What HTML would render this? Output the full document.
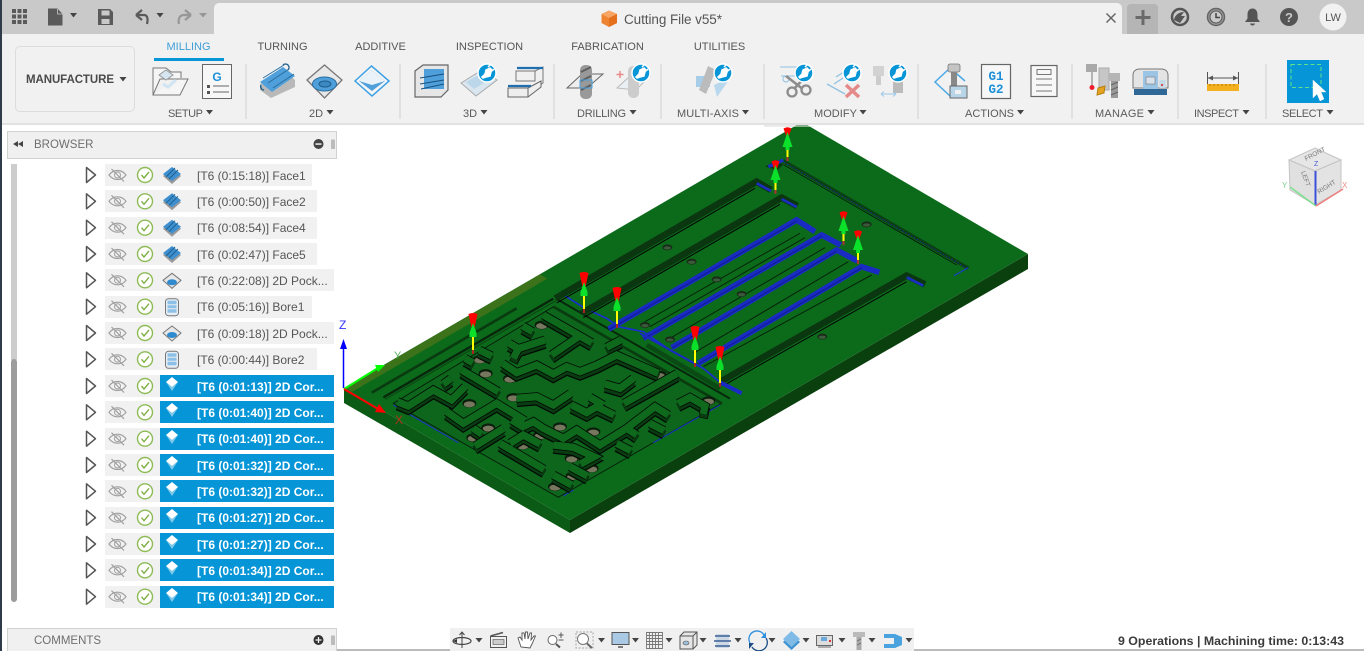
<!DOCTYPE html>
<html><head><meta charset="utf-8"><title>Cutting File v55</title>
<style>
html,body{margin:0;padding:0;background:#fff;width:1364px;height:651px;overflow:hidden}
body{font-family:"Liberation Sans",sans-serif;position:relative}
#root{position:absolute;left:0;top:0;width:1364px;height:651px;overflow:hidden;filter:blur(.35px)}
svg{position:absolute;left:0;top:0;overflow:visible}
text{font-family:"Liberation Sans",sans-serif}
.r{position:absolute;left:105px;height:22px;background:#f1f1f1}
.h{position:absolute;left:55px;top:0;width:174px;height:22px;background:#0696d7}
.t{position:absolute;left:92px;top:.5px;line-height:22px;font-size:12px;color:#555;white-space:nowrap}
.t.b{font-weight:bold;color:#fff}
.p{position:absolute;background:#f0f0f0;border:1.5px solid #d2d2d2;box-sizing:border-box}
</style></head><body><div id="root">

<svg width="1364" height="651" viewBox="0 0 1364 651">
<defs>
 <g id="walls" fill="none" stroke-linejoin="miter" stroke-linecap="butt">
  <path d="M610 75L755 158M715 140L635 195"/>
  <path d="M548 108L578 125"/>
  <path d="M800 172L842 150"/>
  <path d="M508 160L535 176L615 150M535 176L520 205"/>
  <path d="M488 220L530 248L590 225L640 252L680 230L720 245L770 225L830 195L955 250"/>
  <path d="M375 205L398 218M418 180L455 198"/>
  <path d="M365 240L475 305"/>
  <path d="M530 325L590 320L640 345L692 310"/>
  <path d="M852 340L1012 250"/>
  <path d="M795 282L840 295L880 265"/>
  <path d="M695 345L740 368L770 350L822 375M750 322L790 345"/>
  <path d="M172 335L205 348L280 300L335 330L375 290M310 282L332 266"/>
  <path d="M320 365L370 400L470 340L555 392"/>
  <path d="M400 415L425 432M405 468L490 415"/>
  <path d="M515 390L548 410L580 395L610 415L670 445L710 420L780 465L860 415L890 435M860 415L945 350L985 375"/>
  <path d="M480 460L612 538M510 460L550 435L600 462"/>
  <path d="M640 465L700 472L762 500L722 522"/>
  <path d="M640 555L695 585M690 530L742 558"/>
  <path d="M830 460L872 482"/>
  <path d="M930 400L972 422"/>
  <path d="M1015 340L1050 322L1095 348L1090 372"/>
 </g>
 <g id="hole">
  <ellipse cx="0" cy="0" rx="21" ry="13" fill="#0b1d0b"/>
  <ellipse cx="0" cy="3" rx="17" ry="9" fill="#77775f"/>
 </g>
 <g id="hs">
  <ellipse cx="0" cy="0" rx="15" ry="9" fill="#1a2a1a"/><ellipse cx="0" cy="2" rx="11" ry="5" fill="#3a5a3a"/>
 </g>
 <g id="arA">
  <path d="M-4 1.500Q0 -1 4 1.500L1 10H-1Z" fill="#f00"/>
  <path d="M0 5L5 20H2V23H-2V20H-5Z" fill="#0be02a"/>
  <rect x="-1" y="23" width="2" height="7" fill="#ff0"/><rect x="-1" y="30" width="2" height="4" fill="#a33"/>
 </g>
 <g id="arB">
  <path d="M-4.500 1Q0 -1 4.500 1L1 17H-1Z" fill="#f00"/>
  <path d="M0 10L3.500 20V24H-3.500V20Z" fill="#0be02a"/>
  <rect x="-1" y="24" width="2" height="13" fill="#ff0"/><rect x="-1" y="37" width="2" height="4" fill="#a22"/>
 </g>
 <g id="plug">
  <circle r="9" fill="#0696d7" stroke="#fff" stroke-width="1.500"/>
  <path d="M-5 4L-2 1L-1 -3L3 -5L5 -3L4 -1L3 3L-1 4L-4 5Z M1 -6L3 -8M5 -2L7 -4" fill="#fff" stroke="#fff" stroke-width="1.500"/>
 </g>
 <path id="car" d="M-3.500 -2H3.500L0 2.500Z" fill="#444"/>
</defs>

<!-- PLATE -->
<polygon points="344,388 570,520 570,533 344,403" fill="#0b5a16"/>
<polygon points="570,520 1028,254 1028,269 570,533" fill="#0a3f0e"/>
<polygon points="344,388 570,520 1028,254 802,122" fill="#0c6b1b"/>
<path d="M764 125H806L816 127H764Z" fill="#ddd" opacity=".6"/>

<!-- MAZE -->
<g transform="translate(340 290) scale(.33333)">
 <polygon points="12,295 600,-47 622,-34 35,306" fill="#6b7a18" opacity=".5"/>
 <path d="M95 308L530 55" stroke="#0a3a10" stroke-width="8" fill="none"/>
 <path d="M130 322L640 26" stroke="#07260b" stroke-width="7" fill="none"/>
 <path d="M135 328L648 32" stroke="#0c4a15" stroke-width="4" fill="none"/>
 <polygon points="160,340 640,50 1145,340 655,622" fill="#0d661c" stroke="#06210a" stroke-width="3"/>
 <path d="M648 26L1170 326" stroke="#07280c" stroke-width="6" fill="none"/>
 <path d="M640 50L1145 340" stroke="#0a3b10" stroke-width="8" fill="none"/>
 <path d="M160 345L355 458M670 618L700 600M1140 345L940 458" stroke="#1b2fd0" stroke-width="3" fill="none"/>
 <path d="M660 8L735 55L800 85L835 110L910 125L990 180L1090 235L1150 285L1190 305" stroke="#1b2fd0" stroke-width="5" fill="none"/>
 <use href="#hole" x="605" y="105"/><use href="#hole" x="437" y="250"/><use href="#hole" x="510" y="266"/><use href="#hole" x="388" y="340"/><use href="#hole" x="520" y="322"/><use href="#hole" x="420" y="208"/><use href="#hole" x="400" y="443"/><use href="#hole" x="445" y="413"/><use href="#hole" x="548" y="466"/><use href="#hole" x="600" y="436"/><use href="#hole" x="660" y="410"/><use href="#hole" x="695" y="505"/><use href="#hole" x="755" y="535"/><use href="#hole" x="698" y="558"/><use href="#hole" x="645" y="590"/><use href="#hole" x="1105" y="332"/><use href="#hole" x="958" y="255"/><use href="#hole" x="760" y="425"/>
 <use href="#walls" stroke="#020a03" stroke-width="27" transform="translate(0 13)"/>
 <use href="#walls" stroke="#0a3c11" stroke-width="23" transform="translate(0 11)"/>
 <use href="#walls" stroke="#020a03" stroke-width="27"/>
 <use href="#walls" stroke="#0e691d" stroke-width="22"/>
</g>

<!-- CHANNELS -->
<g transform="translate(640 125) scale(.33333)" fill="none">
 <path d="M375 125L410 105L432 118L412 135Z" fill="#0a3a10"/>
 <path d="M430 108L985 430" stroke="#0a3f12" stroke-width="11"/>
 <path d="M432 112L985 432" stroke="#1a2ec0" stroke-width="2" stroke-dasharray="5 5"/>
 <path d="M985 428L942 452" stroke="#1a38e0" stroke-width="3"/>
 <path d="M432 120L950 420" stroke="#000" stroke-width="2"/>
 <path d="M385 125L430 105" stroke="#1a2ec0" stroke-width="10"/>
 <path d="M-254 520L350 170L393 195" stroke="#0a3610" stroke-width="20"/><path d="M350 175L393 198" stroke="#1a2ec0" stroke-width="8"/>
 <path d="M-250 534L345 190" stroke="#000" stroke-width="3"/>
 <path d="M-175 565L425 218L472 243" stroke="#0a3610" stroke-width="20"/><path d="M425 222L470 246" stroke="#1a2ec0" stroke-width="8"/>
 <path d="M-170 578L420 238" stroke="#000" stroke-width="3"/>
 <path d="M-94 612L470 285L525 320" stroke="#1a2bc4" stroke-width="17"/>
 <path d="M-94 614L470 288" stroke="#0c1c8c" stroke-width="3"/>
 <path d="M15 590L480 325M30 605L495 338" stroke="#05230a" stroke-width="3"/>
 <path d="M10 640L545 330L602 360" stroke="#1a2bc4" stroke-width="17"/>
 <path d="M10 642L545 333" stroke="#0c1c8c" stroke-width="3"/>
 <path d="M90 640L555 368" stroke="#05230a" stroke-width="3"/>
 <path d="M95 668L590 375L652 408" stroke="#1a2bc4" stroke-width="17"/>
 <path d="M95 670L590 378" stroke="#0c1c8c" stroke-width="3"/>
 <path d="M160 685L625 410" stroke="#05230a" stroke-width="3"/>
 <path d="M175 715L665 425L718 442" stroke="#1a2bc4" stroke-width="17"/>
 <path d="M175 717L665 428" stroke="#0c1c8c" stroke-width="3"/>
 <path d="M190 725L695 450" stroke="#05230a" stroke-width="3"/>
 <path d="M245 768L800 452L855 478" stroke="#0a3610" stroke-width="20"/><path d="M800 457L850 482" stroke="#1a2ec0" stroke-width="8"/>
 <path d="M250 782L800 470" stroke="#000" stroke-width="3"/>
 <path d="M240 772L305 805" stroke="#1a2bc4" stroke-width="12"/>
 <path d="M0 625L85 672L180 725" stroke="#1a2bc4" stroke-width="6"/>
 <path d="M20 660L240 790" stroke="#0a4a14" stroke-width="14"/>
 <use href="#hs" x="680" y="298"/><use href="#hs" x="82" y="367"/><use href="#hs" x="155" y="410"/><use href="#hs" x="230" y="463"/><use href="#hs" x="305" y="507"/><use href="#hs" x="547" y="635"/><use href="#hs" x="15" y="600"/><use href="#hs" x="90" y="643"/>
</g>
<use href="#arA" x="787.500" y="127"/>
<use href="#arA" x="775.500" y="160"/>
<use href="#arA" x="843.500" y="211"/>
<use href="#arA" x="858" y="230"/>
<use href="#arB" x="695" y="326"/>
<use href="#arB" x="720" y="346"/>
<use href="#arB" x="617" y="287"/>
<use href="#arB" x="584" y="272"/>
<use href="#arB" x="473" y="313"/>

<!-- AXES -->
<path d="M343.500 388V344" stroke="#00f" stroke-width="1.500"/><path d="M343.500 339L340 349H347Z" fill="#00f"/>
<text x="339" y="329" font-size="12" fill="#3232ff">Z</text>
<path d="M344 389L378 368" stroke="#0f0" stroke-width="2"/><path d="M385 365L375 365L378 372Z" fill="#0f0"/>
<text x="394" y="359" font-size="11" fill="#3aa23a" opacity=".8">Y</text>
<path d="M344 389L378 409" stroke="#f00" stroke-width="2"/><path d="M386 413L375 412L379 404Z" fill="#f00"/>
<text x="395" y="424" font-size="12" fill="#b0331a">X</text>

<!-- VIEW CUBE -->
<g>
 <polygon points="1315,148 1341,160 1315,171 1289,160" fill="#e6e6e6" stroke="#c4c4c4"/>
 <polygon points="1289,160 1315,171 1315,205 1290,190" fill="#e0e0e0" stroke="#c4c4c4"/>
 <polygon points="1341,160 1315,171 1315,205 1341,190" fill="#e3e3e3" stroke="#c4c4c4"/>
 <path d="M1315.500 171V206" stroke="#3c4fd8" stroke-width="2"/>
 <path d="M1290 187L1316 206" stroke="#7fe08f" stroke-width="1.500"/>
 <path d="M1316 206L1343 189" stroke="#f07f7f" stroke-width="1.500"/>
 <text x="1282" y="188" font-size="8" fill="#7fd08f">Y</text>
 <text x="1342" y="188" font-size="8" fill="#ee8a8a">X</text>
 <text x="1314" y="166" font-size="7" fill="#4a5ad0">Z</text>
 <text x="0" y="0" font-size="6.500" fill="#777" transform="translate(1306 161) rotate(-28)">FRONT</text>
 <text x="0" y="0" font-size="6.500" fill="#777" transform="translate(1319 194) rotate(-32)">RIGHT</text>
 <text x="0" y="0" font-size="6.500" fill="#777" transform="translate(1301 172) rotate(70)">LEFT</text>
</g>

<!-- bottom line -->
<path d="M337 650H1364" stroke="#777" stroke-width="1"/>
</svg>

<!-- TOP BARS -->
<div style="position:absolute;left:0;top:0;width:1364px;height:34px;background:#c9c9c9"></div>
<div style="position:absolute;left:214px;top:3px;width:908px;height:40px;background:#f1f1f1;border-radius:5px 5px 0 0"></div>
<div style="position:absolute;left:0;top:34px;width:1364px;height:89px;background:#f1f1f1"></div>
<div style="position:absolute;left:0;top:123px;width:1364px;height:2px;background:#e2e2e2"></div>
<div style="position:absolute;left:0;top:0;width:2px;height:651px;background:#2e3b4b"></div>
<div style="position:absolute;left:15px;top:46px;width:120px;height:66px;background:#f1f1f1;border:1.500px solid #dcdcdc;border-radius:5px;box-sizing:border-box"></div>
<div style="position:absolute;left:1127px;top:4px;width:31px;height:30px;background:#b5b5b5;border-radius:4px 4px 0 0"></div>

<svg width="1364" height="125" viewBox="0 0 1364 125">
 <!-- top-left tools -->
 <g fill="#5a5a5a">
  <path d="M12 9h4v4h-4zM17.500 9h4v4h-4zM23 9h4v4h-4zM12 14.500h4v4h-4zM17.500 14.500h4v4h-4zM23 14.500h4v4h-4zM12 20h4v4h-4zM17.500 20h4v4h-4zM23 20h4v4h-4z"/>
  <path d="M48 8.500h9.500l5 5.500v11.500h-14.500z"/>
  <path d="M98 9h12l3 3v13h-15zM101.500 10.500v5h8v-5zM101.500 19v5h8v-5z" fill-rule="evenodd"/>
 </g>
 <path d="M57.500 9V14H62.500" fill="none" stroke="#c9c9c9" stroke-width=".8"/>
 <use href="#car" x="73.500" y="15" fill="#5a5a5a"/>
 <path d="M136 15L142 10M136 15L142 20M136 15H144C148 15 148 20 147 24" fill="none" stroke="#5a5a5a" stroke-width="2.200"/>
 <use href="#car" x="160" y="15"/>
 <path d="M191 15L185 10M191 15L185 20M191 15H184C179 15 178 20 179 24" fill="none" stroke="#979797" stroke-width="2.200"/>
 <path d="M199 13H207L203 17.500Z" fill="#979797"/>

 <!-- title -->
 <polygon points="609,10.500 617,14 617,23 609,27 601.500,23 601.500,14" fill="#ee8432"/>
 <polygon points="609,10.500 617,14 609,18 601.500,14" fill="#f6a565"/>
 <polygon points="609,18 617,14 617,23 609,27" fill="#e5701c"/>
 <text x="624" y="24" font-size="13.500" fill="#555" textLength="98">Cutting File v55*</text>
 <path d="M1106.500 13.500L1115.500 22.500M1115.500 13.500L1106.500 22.500" stroke="#666" stroke-width="1.500"/>
 <path d="M1143 10V25M1135.500 17.500H1150.500" stroke="#6a6a6a" stroke-width="3"/>

 <!-- top right -->
 <circle cx="1180" cy="17" r="8" fill="none" stroke="#555" stroke-width="2.500"/>
 <path d="M1174 20C1175 14 1180 12 1184 12L1181 16L1185 16L1180 23Z" fill="#555"/>
 <circle cx="1216" cy="17" r="8.500" fill="#9a9a9a" stroke="#666" stroke-width="1.500"/>
 <circle cx="1216" cy="17" r="6" fill="#c9c9c9" stroke="#555"/>
 <path d="M1216 13V17.500H1220" fill="none" stroke="#444" stroke-width="1.500"/>
 <path d="M1252.500 8.500c3.500 0 5 3 5 6v4l2.500 3.500h-15l2.500-3.500v-4c0-3 1.500-6 5-6zM1250 23.500h5a2.500 2 0 0 1-5 0z" fill="#555"/>
 <circle cx="1289" cy="17" r="9" fill="#555"/>
 <text x="1289" y="22" font-size="13" font-weight="bold" fill="#c9c9c9" text-anchor="middle">?</text>
 <circle cx="1333" cy="17" r="13.500" fill="#f1f1f1"/>
 <text x="1333" y="21" font-size="11" fill="#555" text-anchor="middle">LW</text>

 <!-- tabs -->
 <g font-size="11" fill="#555" text-anchor="middle">
  <text x="188.500" y="50" fill="#3f9fd6">MILLING</text>
  <text x="282.500" y="50">TURNING</text>
  <text x="380.500" y="50">ADDITIVE</text>
  <text x="489.500" y="50">INSPECTION</text>
  <text x="607.500" y="50">FABRICATION</text>
  <text x="719.500" y="50">UTILITIES</text>
 </g>
 <rect x="154" y="58" width="70" height="3" fill="#0696d7"/>
 <text x="26" y="83" font-size="11.500" font-weight="bold" fill="#4a4a4a" textLength="88">MANUFACTURE</text>
 <use href="#car" x="123" y="79"/>

 <!-- group labels -->
 <g font-size="11" fill="#5a5a5a">
  <text x="168" y="117" textLength="35">SETUP</text><use href="#car" x="209.500" y="112"/>
  <text x="309" y="117">2D</text><use href="#car" x="330" y="112"/>
  <text x="463" y="117">3D</text><use href="#car" x="484" y="112"/>
  <text x="577" y="117" textLength="49">DRILLING</text><use href="#car" x="633" y="112"/>
  <text x="677" y="117" textLength="62">MULTI-AXIS</text><use href="#car" x="745.500" y="112"/>
  <text x="814" y="117" textLength="43">MODIFY</text><use href="#car" x="863" y="112"/>
  <text x="965" y="117" textLength="49">ACTIONS</text><use href="#car" x="1020.500" y="112"/>
  <text x="1095" y="117" textLength="49">MANAGE</text><use href="#car" x="1151" y="112"/>
  <text x="1194" y="117" textLength="45">INSPECT</text><use href="#car" x="1246" y="112"/>
  <text x="1282" y="117" textLength="41">SELECT</text><use href="#car" x="1330" y="112"/>
 </g>
 <path d="M246 64V119M400 64V119M554 64V119M661 64V119M764 64V119M918 64V119M1072 64V119M1178 64V119M1266 64V119" stroke="#dcdcdc" stroke-width="1.500"/>

 <!-- SETUP -->
 <path d="M153 95V68H166L171 72H181V78M153 95H180L188 79H160Z" fill="#f5f5f5" stroke="#777" stroke-width="1"/>
 <path d="M159 75L166 70L173 75L166 80Z" fill="#d5e6f2" stroke="#999"/>
 <path d="M163 84L168 87L176 80" stroke="#d0e4f2" stroke-width="3" fill="none"/>
 <rect x="202.500" y="64.500" width="29" height="34" fill="#f7f7f7" stroke="#666"/>
 <text x="217" y="81" font-size="12" font-weight="bold" fill="#1b8fd8" text-anchor="middle">G</text>
 <path d="M207 85h3v3h-3zM207 91h3v3h-3z" fill="#555"/><path d="M213 86H229M213 92H229" stroke="#666"/>

 <!-- 2D -->
 <polygon points="260,84 284,70 295,80 295,87 271,98 260,90" fill="#b9b9b9"/>
 <polygon points="260,82 283,67 295,76 272,92" fill="#4f9fdb"/>
 <path d="M263 78L284 65M268 83L289 69M273 88L294 74" stroke="#2a6f9f" stroke-width="1" fill="none"/>
 <path d="M283 65a3.500 3.500 0 0 1 5 5M264 90a3.500 3.500 0 0 1 -3 -5" stroke="#1f5f8a" stroke-width="1.300" fill="none"/>
 <polygon points="307,80 324.500,65 342,80 324.500,98" fill="#e8e8e8" stroke="#777" stroke-width="1.300"/>
 <ellipse cx="324.500" cy="84" rx="12" ry="7" fill="#4f9fdb" stroke="#2a6f9f"/>
 <ellipse cx="325" cy="84" rx="6" ry="3" fill="#3b88c3" stroke="#1f5f8a"/>
 <polygon points="355,81 371.500,66 389,81 372,96" fill="#f5f5f5" stroke="#3aa0e6" stroke-width="1.500"/>
 <polygon points="359,81 371.500,70 385,81 372,91" fill="#4f9fdb"/>
 <polygon points="371.500,70 385,81 372,85 359,81" fill="#e8f2f8"/>

 <!-- 3D -->
 <polygon points="415,71 423,65 448,65 448,90 441,97 415,97" fill="#e6e6e6" stroke="#666" stroke-width="1.200"/>
 <rect x="424" y="69" width="20" height="20" fill="#4f9fdb"/>
 <path d="M420 78L444 74M420 84L444 80M421 89L444 84" stroke="#17527f" stroke-width="1" fill="none"/>
 <polygon points="461,83 482,70 497,80 476,96" fill="#d9e6ef" stroke="#aaa"/>
 <polygon points="466,82 482,73 490,79 474,89" fill="#bcd7ea"/>
 <use href="#plug" x="487" y="73"/>
 <path d="M516 71H535V81H516ZM535 71L543 67V83L535 88" fill="#f0f0f0" stroke="#777"/>
 <path d="M508 88H528V97H508ZM528 88L541 81V87L528 97" fill="#eee" stroke="#666"/>
 <path d="M517 68H543M508 86H531" stroke="#1f6fb0" stroke-width="2.200"/>

 <!-- DRILLING -->
 <polygon points="567,88 582,74 603,74 587,88" fill="#eee" stroke="#666"/>
 <rect x="580" y="65" width="12" height="34" rx="5" fill="#999"/>
 <path d="M581 72L591 67M581 81L591 76M581 90L591 85" stroke="#5f5f5f" stroke-width="2"/>
 <rect x="580" y="80" width="12" height="8" fill="none" stroke="#4aa3df"/>
 <path d="M620 71V78M616.500 74.500H623.500" stroke="#e88a8a" stroke-width="1.500"/>
 <polygon points="617,88 630,76 650,76 636,90" fill="#e9eff3" stroke="#bbb"/>
 <rect x="628" y="66" width="11" height="32" rx="5" fill="#ccc"/>
 <use href="#plug" x="641" y="73"/>

 <!-- MULTI-AXIS -->
 <polygon points="696,76 710,76 710,87 696,87" fill="#a8cde8"/>
 <polygon points="708,66 716,70 706,94 699,90" fill="#bbb"/>
 <polygon points="714,85 731,77 717,97" fill="#b9d8ee"/>
 <use href="#plug" x="723" y="73"/>

 <!-- MODIFY -->
 <path d="M780 67H800M781 76H795" stroke="#8fc2e3" stroke-width="1"/>
 <circle cx="786" cy="79" r="3" fill="none" stroke="#8fc2e3"/>
 <path d="M786 76L804 90M806 76L793 90" stroke="#8c8c8c" stroke-width="2.600"/>
 <circle cx="792" cy="92" r="4.500" fill="#f1f1f1" stroke="#8c8c8c" stroke-width="2.300"/>
 <circle cx="806" cy="90" r="4.500" fill="#f1f1f1" stroke="#8c8c8c" stroke-width="2.300"/>
 <use href="#plug" x="804" y="73"/>
 <path d="M827 84L845 94M836 77L850 68M834 84L843 78" stroke="#8fc2e3" stroke-width="1.300" fill="none"/>
 <use href="#plug" x="852" y="73"/>
 <path d="M846 85L859 97M859 85L846 97" stroke="#e58a8a" stroke-width="3.500"/>
 <rect x="873" y="66" width="11" height="10" fill="#d2d2d2"/><rect x="876" y="76" width="5" height="9" fill="#ccc"/>
 <rect x="893" y="69" width="10" height="24" fill="#bbb"/>
 <path d="M881 94H896M881 94l3-2.500M881 94l3 2.500M896 94l-3-2.500M896 94l-3 2.500" stroke="#9cc8e6" fill="none"/>
 <use href="#plug" x="898" y="73"/>

 <!-- ACTIONS -->
 <path d="M950 68L935 82L950 96M950 68L965 81" stroke="#4aa8e8" stroke-width="1.500" fill="none"/>
 <rect x="948" y="64" width="12" height="8" rx="2" fill="#c4c4c4" stroke="#777" stroke-width=".8"/>
 <rect x="951" y="72" width="6" height="14" fill="#888"/>
 <rect x="950" y="86" width="17" height="12" fill="#b9d5e8" stroke="#666"/>
 <rect x="955" y="90" width="6" height="4" fill="#f1f1f1"/>
 <rect x="981.500" y="64.500" width="29" height="34" fill="#f7f7f7" stroke="#666" stroke-width="1.200"/>
 <text x="996" y="80" font-size="12.500" font-weight="bold" fill="#1b8fd8" text-anchor="middle" style="font-family:'Liberation Mono',monospace">G1</text>
 <text x="996" y="93" font-size="12.500" font-weight="bold" fill="#1b8fd8" text-anchor="middle" style="font-family:'Liberation Mono',monospace">G2</text>
 <rect x="1031" y="65.500" width="26" height="31" fill="#f7f7f7" stroke="#666" stroke-width="1.200"/>
 <rect x="1037" y="69.500" width="14" height="5" fill="none" stroke="#777"/>
 <path d="M1036 79H1052M1036 85H1052M1036 91H1052" stroke="#777"/>

 <!-- MANAGE -->
 <rect x="1086" y="64" width="11" height="8" fill="#a9a9a9"/><path d="M1092 72V86" stroke="#777"/>
 <circle cx="1092" cy="87.500" r="2.500" fill="#f01f30"/>
 <rect x="1099" y="68" width="10" height="22" fill="#c6c6c6" stroke="#aaa"/>
 <polygon points="1098,88 1105,86 1104,93 1097,95" fill="#e3a21f" stroke="#b57f10"/>
 <rect x="1109" y="73" width="11" height="8" fill="#b5b5b5"/><rect x="1111" y="81" width="7" height="17" fill="#999"/>
 <path d="M1111 85L1118 82M1111 90L1118 87M1111 95L1118 92" stroke="#666"/>
 <path d="M1133 88V75C1133 71 1136 69 1140 69H1161C1165 69 1168 71 1168 75V88Z" fill="#e4e4e4" stroke="#777"/>
 <rect x="1143" y="71" width="15" height="18" fill="#9cc4e4"/>
 <rect x="1146" y="77" width="9" height="7" fill="#d9e2ea" stroke="#777" stroke-width=".6"/>
 <rect x="1159.500" y="80" width="6" height="8" fill="#c5d8e6"/><circle cx="1162" cy="85" r="1" fill="#d22"/>
 <rect x="1134" y="89" width="33" height="6" fill="#2f6796"/>

 <!-- INSPECT -->
 <path d="M1207.500 72V88M1238.500 72V88M1208 78H1238" stroke="#555"/>
 <path d="M1208 78l5-2.500v5zM1238 78l-5-2.500v5z" fill="#555"/>
 <rect x="1207" y="84" width="32" height="7" fill="#f3b01f"/>
 <path d="M1210 84v2M1214 84v2M1218 84v2M1222 84v2M1226 84v2M1230 84v2M1234 84v2" stroke="#a66f00" stroke-width=".8"/>

 <!-- SELECT -->
 <rect x="1287" y="60" width="42" height="43" fill="#0696d7"/>
 <rect x="1291" y="64.500" width="30" height="23" fill="none" stroke="#62e08c" stroke-width="1" stroke-dasharray="4 2.500"/>
 <path d="M1313 80V98L1317 94L1320 101L1324 99L1321 92L1326 92Z" fill="#fff" stroke="#e8e8e8" stroke-width=".5"/>
</svg>

<!-- BROWSER -->
<div class="p" style="left:7px;top:131px;width:330px;height:28px"></div>
<div style="position:absolute;left:34px;top:138px;font-size:11.500px;color:#6f6f6f;line-height:15px">BROWSER</div>
<div class="p" style="left:7px;top:628px;width:330px;height:26px"></div>
<div style="position:absolute;left:34px;top:634px;font-size:11.500px;color:#6f6f6f;line-height:15px">COMMENTS</div>
<div style="position:absolute;left:11px;top:164px;width:6px;height:196px;background:#cdcdcd"></div>
<div style="position:absolute;left:11px;top:359px;width:6px;height:243px;background:#9c9c9c;border-radius:3px"></div>

<svg width="345" height="651" viewBox="0 0 345 651">
 <defs>
  <g id="tri"><path d="M1 1.500L10 9L1 16.500Z" fill="#fff" stroke="#555" stroke-width="1.500" stroke-linejoin="round"/></g>
  <g id="eye"><path d="M-8.500 0C-4 -6 4 -6 8.500 0C4 6 -4 6 -8.500 0Z" fill="none" stroke="#a0a0a0" stroke-width="1.200"/><circle r="3" fill="none" stroke="#a0a0a0"/><path d="M-6 -6L6.500 6.500" stroke="#a0a0a0" stroke-width="1.200"/></g>
  <g id="chk"><circle r="7.500" fill="#fff" stroke="#8dbb55" stroke-width="1.400"/><path d="M-3.500 0L-1 3L4 -3" fill="none" stroke="#7fb045" stroke-width="1.400"/></g>
  <g id="fc"><polygon points="-9,1 0,-7 9,1 0,9" fill="#999"/><polygon points="-9,-1 0,-8 9,-1 0,6" fill="#3d8fd0"/><path d="M-6 2L3 -7M-3 4L6 -5" stroke="#1f5f8a" stroke-width="1"/></g>
  <g id="pk"><polygon points="-9,0 0,-7 9,0 0,8" fill="#e8e8e8" stroke="#777"/><ellipse cx="0" cy="2" rx="5" ry="3" fill="#2f8ad0"/></g>
  <g id="bo"><rect x="-6.500" y="-8" width="13" height="17" rx="3" fill="#e6eef4" stroke="#777"/><rect x="-4.500" y="-6" width="9" height="12" fill="#8cc0e6"/><path d="M-4.500 -2H4.500M-4.500 2H4.500" stroke="#e6eef4"/></g>
  <g id="cr"><polygon points="-6,0 0,-5 6,0 0,5" fill="#fff"/><polygon points="-6,0 0,5 6,0 0,9" fill="#cfe9f7" opacity=".6"/></g>
 </defs>
 <path d="M13 144L18 141V147ZM18 144L23 141V147Z" fill="#444"/>
 <circle cx="318.500" cy="144" r="5" fill="#444"/><rect x="315.500" y="143.300" width="6" height="1.500" fill="#f0f0f0"/>
 <path d="M332 139.500V149M334 139.500V149" stroke="#888"/>
 <circle cx="318.500" cy="640" r="5" fill="#333"/><path d="M315.500 640H321.500M318.500 637V643" stroke="#f0f0f0" stroke-width="1.300"/>
 <path d="M332 635.500V645M334 635.500V645" stroke="#888"/>
</svg>

<!-- rows -->
<div class="r" style="top:164px;width:207px"><div class="t">[T6 (0:15:18)] Face1</div></div>
<div class="r" style="top:190.300px;width:212px"><div class="t">[T6 (0:00:50)] Face2</div></div>
<div class="r" style="top:216.700px;width:212px"><div class="t">[T6 (0:08:54)] Face4</div></div>
<div class="r" style="top:243px;width:212px"><div class="t">[T6 (0:02:47)] Face5</div></div>
<div class="r" style="top:269.300px;width:229px"><div class="t">[T6 (0:22:08)] 2D Pock...</div></div>
<div class="r" style="top:295.700px;width:207px"><div class="t">[T6 (0:05:16)] Bore1</div></div>
<div class="r" style="top:322px;width:229px"><div class="t">[T6 (0:09:18)] 2D Pock...</div></div>
<div class="r" style="top:348.300px;width:212px"><div class="t">[T6 (0:00:44)] Bore2</div></div>
<div class="r" style="top:375px;width:229px"><div class="h"></div><div class="t b">[T6 (0:01:13)] 2D Cor...</div></div>
<div class="r" style="top:401.300px;width:229px"><div class="h"></div><div class="t b">[T6 (0:01:40)] 2D Cor...</div></div>
<div class="r" style="top:427.700px;width:229px"><div class="h"></div><div class="t b">[T6 (0:01:40)] 2D Cor...</div></div>
<div class="r" style="top:454px;width:229px"><div class="h"></div><div class="t b">[T6 (0:01:32)] 2D Cor...</div></div>
<div class="r" style="top:480.300px;width:229px"><div class="h"></div><div class="t b">[T6 (0:01:32)] 2D Cor...</div></div>
<div class="r" style="top:506.700px;width:229px"><div class="h"></div><div class="t b">[T6 (0:01:27)] 2D Cor...</div></div>
<div class="r" style="top:533px;width:229px"><div class="h"></div><div class="t b">[T6 (0:01:27)] 2D Cor...</div></div>
<div class="r" style="top:559.300px;width:229px"><div class="h"></div><div class="t b">[T6 (0:01:34)] 2D Cor...</div></div>
<div class="r" style="top:585.700px;width:229px"><div class="h"></div><div class="t b">[T6 (0:01:34)] 2D Cor...</div></div>

<svg width="345" height="651" viewBox="0 0 345 651">
 <g>
  <use href="#tri" x="85.500" y="166"/><use href="#eye" x="117.500" y="175"/><use href="#chk" x="145" y="175"/><use href="#fc" x="172" y="175"/>
  <use href="#tri" x="85.500" y="192.300"/><use href="#eye" x="117.500" y="201.300"/><use href="#chk" x="145" y="201.300"/><use href="#fc" x="172" y="201.300"/>
  <use href="#tri" x="85.500" y="218.700"/><use href="#eye" x="117.500" y="227.700"/><use href="#chk" x="145" y="227.700"/><use href="#fc" x="172" y="227.700"/>
  <use href="#tri" x="85.500" y="245"/><use href="#eye" x="117.500" y="254"/><use href="#chk" x="145" y="254"/><use href="#fc" x="172" y="254"/>
  <use href="#tri" x="85.500" y="271.300"/><use href="#eye" x="117.500" y="280.300"/><use href="#chk" x="145" y="280.300"/><use href="#pk" x="172" y="280.300"/>
  <use href="#tri" x="85.500" y="297.700"/><use href="#eye" x="117.500" y="306.700"/><use href="#chk" x="145" y="306.700"/><use href="#bo" x="172" y="306.700"/>
  <use href="#tri" x="85.500" y="324"/><use href="#eye" x="117.500" y="333"/><use href="#chk" x="145" y="333"/><use href="#pk" x="172" y="333"/>
  <use href="#tri" x="85.500" y="350.300"/><use href="#eye" x="117.500" y="359.300"/><use href="#chk" x="145" y="359.300"/><use href="#bo" x="172" y="359.300"/>
  <use href="#tri" x="85.500" y="377"/><use href="#eye" x="117.500" y="386"/><use href="#chk" x="145" y="386"/><use href="#cr" x="172" y="382"/>
  <use href="#tri" x="85.500" y="403.300"/><use href="#eye" x="117.500" y="412.300"/><use href="#chk" x="145" y="412.300"/><use href="#cr" x="172" y="408"/>
  <use href="#tri" x="85.500" y="429.700"/><use href="#eye" x="117.500" y="438.700"/><use href="#chk" x="145" y="438.700"/><use href="#cr" x="172" y="435"/>
  <use href="#tri" x="85.500" y="456"/><use href="#eye" x="117.500" y="465"/><use href="#chk" x="145" y="465"/><use href="#cr" x="172" y="461"/>
  <use href="#tri" x="85.500" y="482.300"/><use href="#eye" x="117.500" y="491.300"/><use href="#chk" x="145" y="491.300"/><use href="#cr" x="172" y="487"/>
  <use href="#tri" x="85.500" y="508.700"/><use href="#eye" x="117.500" y="517.700"/><use href="#chk" x="145" y="517.700"/><use href="#cr" x="172" y="514"/>
  <use href="#tri" x="85.500" y="535"/><use href="#eye" x="117.500" y="544"/><use href="#chk" x="145" y="544"/><use href="#cr" x="172" y="540"/>
  <use href="#tri" x="85.500" y="561.300"/><use href="#eye" x="117.500" y="570.300"/><use href="#chk" x="145" y="570.300"/><use href="#cr" x="172" y="566"/>
  <use href="#tri" x="85.500" y="587.700"/><use href="#eye" x="117.500" y="596.700"/><use href="#chk" x="145" y="596.700"/><use href="#cr" x="172" y="593"/>
 </g>
</svg>

<!-- NAV BAR -->
<div style="position:absolute;left:450px;top:628px;width:464px;height:23px;background:#f0f0f0"></div>
<svg width="1364" height="651" viewBox="0 0 1364 651">
 <!-- orbit -->
 <path d="M462 632V648M459.500 635L462 632L464.500 635" stroke="#444" fill="none"/>
 <ellipse cx="462" cy="641" rx="9" ry="3.500" fill="none" stroke="#444" stroke-width="1.200"/>
 <path d="M453 641L457 639V643Z" fill="#333"/>
 <use href="#car" x="479" y="640"/>
 <!-- capture -->
 <rect x="490.500" y="636.500" width="16" height="11" fill="none" stroke="#555"/><rect x="493" y="639.500" width="11" height="5" fill="#ccc" stroke="#666" stroke-width=".7"/>
 <path d="M490.500 636L503 632.500" stroke="#555" stroke-width="1.500"/>
 <!-- hand -->
 <path d="M521 647L518 638L520 637L522 640L522 633H524L525 639L525.500 632H527.500L528 639L530 633H531.500L531 640L534 636H535.500L532 644L530 648Z" fill="#fff" stroke="#555" stroke-width=".9"/>
 <!-- zoom -->
 <circle cx="552.500" cy="640" r="4.500" fill="#fff" stroke="#666"/><path d="M556 644L560 647.500" stroke="#555" stroke-width="2"/>
 <path d="M561 632.500V638M558.500 635H563.500M558.500 640H563.500" stroke="#555"/>
 <!-- fit -->
 <rect x="576" y="632" width="17" height="16" fill="none" stroke="#aaa" stroke-dasharray="2 1.500"/>
 <circle cx="583" cy="639" r="5.500" fill="#fff" stroke="#777"/><path d="M587 643.500L592 648" stroke="#666" stroke-width="2"/>
 <use href="#car" x="601.500" y="640"/>
 <!-- display -->
 <rect x="612" y="632.500" width="17" height="12" fill="#a9c9e4" stroke="#555"/><path d="M618 647H623" stroke="#555" stroke-width="1.500"/>
 <use href="#car" x="635.500" y="640"/>
 <!-- grid -->
 <path d="M646.500 632.500H662.500V648.500H646.500ZM649.500 632.500V648.500M652.500 632.500V648.500M655.500 632.500V648.500M658.500 632.500V648.500M646.500 635.500H662.500M646.500 638.500H662.500M646.500 641.500H662.500M646.500 644.500H662.500" fill="none" stroke="#777" stroke-width=".9"/>
 <use href="#car" x="669" y="640"/>
 <!-- visual style -->
 <path d="M680 636H693V649H680ZM680 636L684 632H697V645L693 649M693 636L697 632" fill="#e6e6e6" stroke="#555"/>
 <ellipse cx="686" cy="643" rx="3" ry="2" fill="#9dc1dd" stroke="#555" stroke-width=".6"/>
 <use href="#car" x="703" y="640"/>
 <!-- sections -->
 <path d="M716 634H729V648H716Z" fill="#a9c0da" opacity=".5"/>
 <path d="M715 636H730M714 641H731M715 646H730" stroke="#3a5f96" stroke-width="1.600"/>
 <use href="#car" x="738" y="640"/>
 <!-- rotate -->
 <path d="M750 643A8 8 0 0 1 764 635" fill="none" stroke="#2f8fdf" stroke-width="1.300"/><path d="M766 638A8 8 0 0 1 752 647" fill="none" stroke="#1a4d86" stroke-width="1.300"/>
 <path d="M766 632V638H761Z" fill="#2f8fdf"/><path d="M749 649V643H754Z" fill="#1a4d86"/>
 <use href="#car" x="772" y="640"/>
 <!-- stack -->
 <polygon points="783,642 791.500,634 800,642 791.500,650" fill="#3f93d2"/>
 <polygon points="783,639 791.500,631 800,639 791.500,647" fill="#7fbbe6"/>
 <use href="#car" x="806" y="640"/>
 <!-- machine -->
 <rect x="816.500" y="635.500" width="16" height="10" fill="#ddd" stroke="#666"/><rect x="821" y="637" width="6" height="4" fill="#6aa9dc"/><rect x="829" y="640" width="2" height="2" fill="#d33"/><path d="M818 647H831" stroke="#666"/>
 <use href="#car" x="842" y="640"/>
 <!-- tool -->
 <rect x="853" y="632" width="12" height="5" fill="#bbb"/><rect x="856.500" y="637" width="5" height="13" fill="#aaa"/><path d="M857 641L861 639M857 645L861 643" stroke="#777"/>
 <use href="#car" x="872" y="640"/>
 <!-- pipe -->
 <path d="M884 634H895L902 637V645L895 648H884V644H894V638H884Z" fill="#4aa3df"/>
 <use href="#car" x="909" y="640"/>
 <text x="1118" y="645" font-size="12" font-weight="bold" fill="#3a3a3a" textLength="226" lengthAdjust="spacingAndGlyphs">9 Operations | Machining time: 0:13:43</text>
</svg>

</div></body></html>
